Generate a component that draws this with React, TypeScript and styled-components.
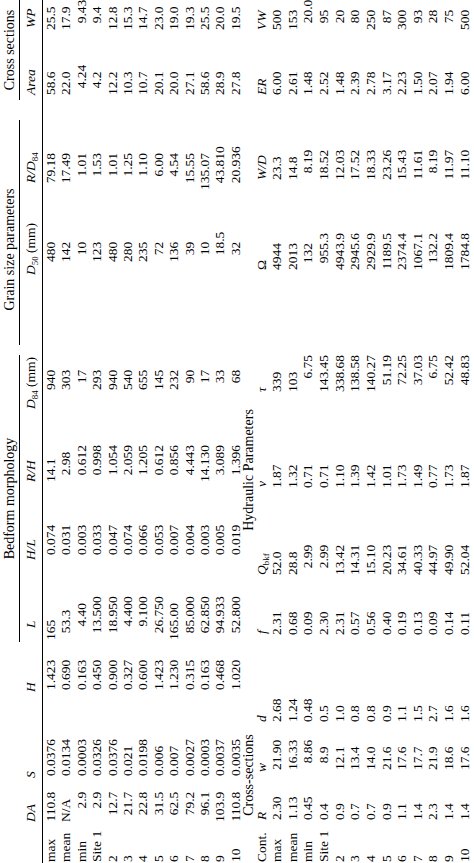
import * as React from "react";
import styled, { createGlobalStyle } from "styled-components";

/**
 * 旋转的数据表：按未旋转的版面（863 x 474）排好，再整体逆时针转 90°
 */

const Global = createGlobalStyle`
  html, body { margin: 0; padding: 0; background: #fff; }
`;

const Page = styled.div`
  width: 474px;
  height: 863px;
  overflow: hidden;
  background: #fff;
`;

const Sheet = styled.div`
  width: 863px;
  height: 474px;
  transform-origin: 0 0;
  transform: translateY(863px) rotate(-90deg);
  font-family: "Liberation Serif", "Times New Roman", serif;
  font-size: 13.5px;
  color: #000;
`;

const SpanRow = styled.div<{ $h: number }>`
  display: flex;
  height: ${(p) => p.$h}px;
  line-height: ${(p) => p.$h - 1}px;
  white-space: nowrap;
  font-size: 14px;
`;

const SpanGroup = styled.div<{ $ml: number; $w: number; $rule?: boolean; $shift?: number }>`
  margin-left: ${(p) => p.$ml}px;
  width: ${(p) => p.$w}px;
  flex: none;
  box-sizing: border-box;
  text-align: center;
  border-bottom: ${(p) => (p.$rule ? "1px solid #000" : "none")};
  & > span {
    display: inline-block;
    transform: translateX(${(p) => p.$shift || 0}px);
  }
`;

const Row = styled.div<{ $cols: string; $h: number; $top?: number; $rule?: boolean }>`
  display: grid;
  grid-template-columns: ${(p) => p.$cols};
  height: ${(p) => p.$h}px;
  box-sizing: content-box;
  padding-top: ${(p) => p.$top || 0}px;
  line-height: ${(p) => p.$h - (p.$top || 0)}px;
  border-bottom: ${(p) => (p.$rule ? "1.6px solid #000" : "none")};
  white-space: nowrap;
`;

const Cell = styled.div<{ $pad?: number }>`
  padding-left: ${(p) => Math.max(p.$pad || 0, 0)}px;
  margin-left: ${(p) => Math.min(p.$pad || 0, 0)}px;
  overflow: visible;
`;

const Head = styled.span`
  font-style: italic;
`;

const Up = styled.span`
  font-style: normal;
`;

const Sub = styled.sub`
  font-size: 0.66em;
  font-style: normal;
  vertical-align: -0.3em;
  line-height: 0;
`;

const IntPart = styled.span<{ $n: number }>`
  display: inline-block;
  width: ${(p) => p.$n * 0.5}em;
  text-align: right;
`;

type Col = { w: number; int: number; pad?: number; head: React.ReactNode; vals: string[] };

const labels = ["max", "mean", "min", "Site 1", "2", "3", "4", "5", "6", "7", "8", "9", "10"];

const cols1: Col[] = [
  { w: 46, int: 3, head: <Head>DA</Head>, vals: ["110.8", "N/A", "2.9", "2.9", "12.7", "21.7", "22.8", "31.5", "62.5", "79.2", "96.1", "103.9", "110.8"] },
  { w: 86, int: 1, pad: -2, head: <Head>S</Head>, vals: ["0.0376", "0.0134", "0.0003", "0.0326", "0.0376", "0.021", "0.0198", "0.006", "0.007", "0.0027", "0.0003", "0.0037", "0.0035"] },
  { w: 50, int: 1, pad: -2, head: <Head>H</Head>, vals: ["1.423", "0.690", "0.163", "0.450", "0.900", "0.327", "0.600", "1.423", "1.230", "0.315", "0.163", "0.468", "1.020"] },
  { w: 85, int: 3, pad: 12, head: <Head>L</Head>, vals: ["165", "53.3", "4.40", "13.500", "18.950", "4.400", "9.100", "26.750", "165.00", "85.000", "62.850", "94.933", "52.800"] },
  { w: 73, int: 1, pad: -5, head: <Head>H/L</Head>, vals: ["0.074", "0.031", "0.003", "0.033", "0.047", "0.074", "0.066", "0.053", "0.007", "0.004", "0.003", "0.005", "0.019"] },
  { w: 92, int: 2, head: <Head>R/H</Head>, vals: ["14.1", "2.98", "0.612", "0.998", "1.054", "2.059", "1.205", "0.612", "0.856", "4.443", "14.130", "3.089", "1.396"] },
  { w: 128, int: 3, pad: -19, head: <Head>D<Sub>84</Sub> <Up>(mm)</Up></Head>, vals: ["940", "303", "17", "293", "940", "540", "655", "145", "232", "90", "17", "33", "68"] },
  { w: 72, int: 3, pad: -13, head: <Head>D<Sub>50</Sub> <Up>(mm)</Up></Head>, vals: ["480", "142", "10", "123", "480", "280", "235", "72", "136", "39", "10", "18.5", "32"] },
  { w: 95, int: 3, pad: 7, head: <Head>R/D<Sub>84</Sub></Head>, vals: ["79.18", "17.49", "1.01", "1.53", "1.01", "1.25", "1.10", "6.00", "4.54", "15.55", "135.07", "43.810", "20.936"] },
  { w: 65, int: 2, head: <Head>Area</Head>, vals: ["58.6", "22.0", "4.24", "4.2", "12.2", "10.3", "10.7", "20.1", "20.0", "27.1", "58.6", "28.9", "27.8"] },
  { w: 30, int: 2, pad: 2, head: <Head>WP</Head>, vals: ["25.5", "17.9", "9.43", "9.4", "12.8", "15.3", "14.7", "23.0", "19.0", "19.3", "25.5", "20.0", "19.5"] },
];

const cols2: Col[] = [
  { w: 50, int: 1, head: <Head>R</Head>, vals: ["2.30", "1.13", "0.45", "0.4", "0.9", "0.7", "0.7", "0.9", "1.1", "1.4", "2.3", "1.4", "1.4"] },
  { w: 48, int: 2, pad: -2, head: <Head>w</Head>, vals: ["21.90", "16.33", "8.86", "8.9", "12.1", "13.4", "14.0", "21.6", "17.6", "17.7", "21.9", "18.6", "17.6"] },
  { w: 87, int: 1, head: <Head>d</Head>, vals: ["2.68", "1.24", "0.48", "0.5", "1.0", "0.8", "0.8", "0.9", "1.1", "1.5", "2.7", "1.6", "1.6"] },
  { w: 60, int: 1, pad: 1, head: <Head>f</Head>, vals: ["2.31", "0.68", "0.09", "2.30", "2.31", "0.57", "0.56", "0.40", "0.19", "0.13", "0.09", "0.14", "0.11"] },
  { w: 87, int: 2, head: <Head>Q<Sub>bkf</Sub></Head>, vals: ["52.0", "28.8", "2.99", "2.99", "13.42", "14.31", "15.10", "20.23", "34.61", "40.33", "44.97", "49.90", "52.04"] },
  { w: 96, int: 1, pad: 1, head: <Head>v</Head>, vals: ["1.87", "1.32", "0.71", "0.71", "1.10", "1.39", "1.42", "1.01", "1.73", "1.49", "0.77", "1.73", "1.87"] },
  { w: 122, int: 3, head: <Head>τ</Head>, vals: ["339", "103", "6.75", "143.45", "338.68", "138.58", "140.27", "51.19", "72.25", "37.03", "6.75", "52.42", "48.83"] },
  { w: 90, int: 4, head: <Up>Ω</Up>, vals: ["4944", "2013", "132", "955.3", "4943.9", "2945.6", "2929.9", "1189.5", "2374.4", "1067.1", "132.2", "1809.4", "1784.8"] },
  { w: 85, int: 2, head: <Head>W/D</Head>, vals: ["23.3", "14.8", "8.19", "18.52", "12.03", "17.52", "18.33", "23.26", "15.43", "11.61", "8.19", "11.97", "11.10"] },
  { w: 65, int: 1, head: <Head>ER</Head>, vals: ["6.00", "2.61", "1.48", "2.52", "1.48", "2.39", "2.78", "3.17", "2.23", "1.50", "2.07", "1.94", "6.00"] },
  { w: 30, int: 3, head: <Head>VW</Head>, vals: ["500", "153", "20.0", "95", "20", "80", "250", "87", "300", "93", "28", "75", "500"] },
];

const Num = ({ v, n }: { v: string; n: number }) => {
  if (!/^[\d.]+$/.test(v)) return <>{v}</>;
  const [i, f] = v.split(".");
  return (
    <>
      <IntPart $n={n}>{i}</IntPart>
      {f !== undefined && "." + f}
    </>
  );
};

const Block = ({
  first,
  labelW,
  cols,
  headH,
  headTop,
  rowH,
  rule,
}: {
  first: React.ReactNode;
  labelW: number;
  cols: Col[];
  headH: number;
  headTop: number;
  rowH: number;
  rule?: boolean;
}) => {
  const template = [labelW, ...cols.map((c) => c.w)].map((w) => w + "px").join(" ");
  return (
    <>
      <Row $cols={template} $h={headH} $top={headTop} $rule={rule}>
        <Cell $pad={1}>{first}</Cell>
        {cols.map((c, k) => (
          <Cell key={k} $pad={c.pad}>
            {c.head}
          </Cell>
        ))}
      </Row>
      {labels.map((lab, r) => (
        <Row key={lab} $cols={template} $h={rowH}>
          <Cell $pad={1}>{lab}</Cell>
          {cols.map((c, k) => (
            <Cell key={k}>
              <Num v={c.vals[r]} n={c.int} />
            </Cell>
          ))}
        </Row>
      ))}
    </>
  );
};

export default function App() {
  return (
    <Page>
      <Global />
      <Sheet>
        <SpanRow $h={20}>
          <SpanGroup $ml={221} $w={287} $rule>
            <span>Bedform morphology</span>
          </SpanGroup>
          <SpanGroup $ml={10} $w={225} $rule $shift={-17}>
            <span>Grain size parameters</span>
          </SpanGroup>
          <SpanGroup $ml={20} $w={100} $rule>
            <span>Cross sections</span>
          </SpanGroup>
        </SpanRow>
        <Block first="" labelW={41} cols={cols1} headH={16} headTop={6} rowH={15.4} rule />
        <SpanRow $h={12}>
          <SpanGroup $ml={43} $w={90}>
            <span>Cross-sections</span>
          </SpanGroup>
          <SpanGroup $ml={155} $w={210}>
            <span>Hydraulic Parameters</span>
          </SpanGroup>
        </SpanRow>
        <Block first="Cont." labelW={43} cols={cols2} headH={14} headTop={0} rowH={15.65} />
      </Sheet>
    </Page>
  );
}
